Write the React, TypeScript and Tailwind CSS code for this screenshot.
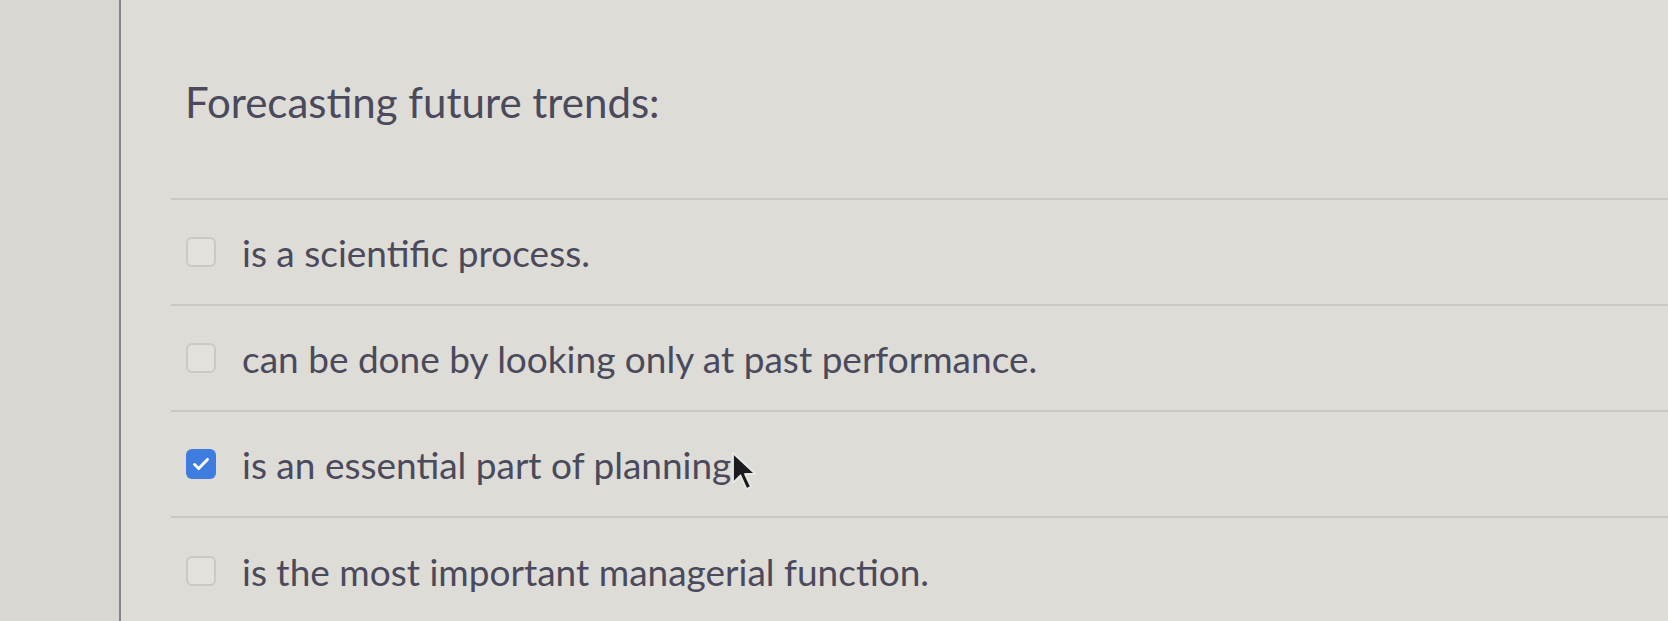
import React from 'react';

const OPTIONS = [
  { text: 'is a scientific process.', checked: false },
  { text: 'can be done by looking only at past performance.', checked: false },
  { text: 'is an essential part of planning', checked: true },
  { text: 'is the most important managerial function.', checked: false },
];

function Checkbox({ checked }: { checked: boolean }) {
  if (checked) {
    return (
      <span className="flex h-[30px] w-[30px] shrink-0 items-center justify-center rounded-[6px] bg-[#3d7ddf]">
        <svg viewBox="0 0 24 24" className="h-[22px] w-[22px]" fill="none" stroke="white" strokeWidth="3.2" strokeLinecap="round" strokeLinejoin="round">
          <path d="M5 12.5l4.5 4.5L19 7" />
        </svg>
      </span>
    );
  }
  return <span className="h-[30px] w-[30px] shrink-0 rounded-[6px] border-2 border-[#cac9c3] bg-[#e2e1dc]" />;
}

export default function App() {
  return (
    <main
      className="flex h-[621px] w-full overflow-hidden bg-[#dedcd7]"
      style={{ fontFamily: 'Lato, "Open Sans", sans-serif' }}
    >
      {/* left gutter */}
      <div className="w-[121px] shrink-0 border-r-2 border-[#85848a] bg-[#d8d7d2]" />

      <div className="relative flex-1 pl-[50px]">
        <div className="flex h-[200px] items-start border-b-2 border-[#c9c8c2] pt-[81px] pl-[14px]">
          <h1 className="text-[42px] leading-none text-[#4a4a5c]">Forecasting future trends:</h1>
        </div>

        {OPTIONS.map((o, i) => (
          <div
            key={i}
            className={`flex h-[106px] items-center gap-[26px] pl-[15px] ${i < OPTIONS.length - 1 ? 'border-b-2 border-[#c9c8c2]' : ''}`}
          >
            <Checkbox checked={o.checked} />
            <span className="text-[37px] leading-none text-[#4a4a5c]">{o.text}</span>
          </div>
        ))}

        {/* mouse pointer */}
        <svg viewBox="0 0 20 28" className="absolute left-[609px] top-[450px] h-[42px] w-[30px]">
          <path d="M2 2 L2 22 L7 17 L11 26 L14 24.5 L10 16 L17 16 Z" fill="#1b1b1f" stroke="#e8e8e8" strokeWidth="1.2" strokeLinejoin="round" />
        </svg>
      </div>
    </main>
  );
}
